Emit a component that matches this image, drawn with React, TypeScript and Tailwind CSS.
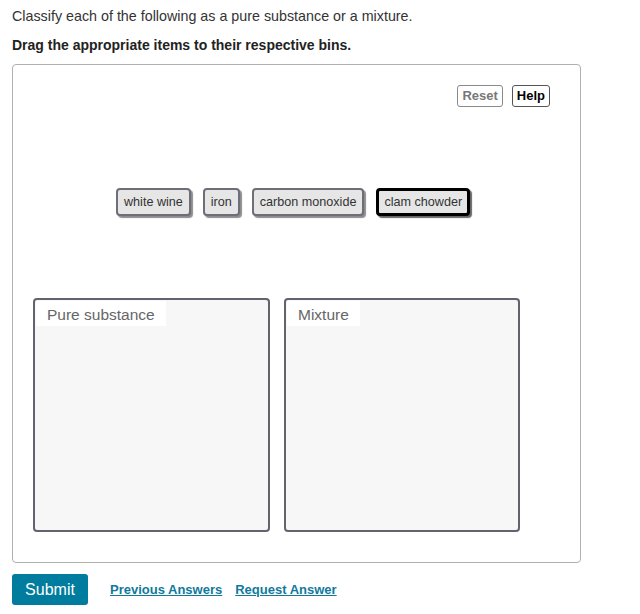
import React from "react";

const Item = ({ label, active }: { label: string; active?: boolean }) => (
  <div
    className={
      active
        ? "h-[28px] px-[5px] flex items-center rounded-[4px] border-[3px] border-black bg-[#e6e6e6] text-[12.6px] text-[#333] shadow-[2px_2px_1px_rgba(0,0,0,0.6)]"
        : "h-[28px] px-[6px] flex items-center rounded-[4px] border-2 border-[#6e6e7a] bg-[#e6e6e6] text-[12.6px] text-[#333] shadow-[2px_2px_1px_rgba(0,0,0,0.45)]"
    }
  >
    {label}
  </div>
);

const Bin = ({ label, w }: { label: string; w: string }) => (
  <div className={`${w} h-[234px] rounded-[4px] border-2 border-[#63636f] bg-[#f7f7f7] p-[1px]`}>
    <div className="inline-block bg-white pl-[11px] pr-[11px] h-[25px] pt-[3px] leading-[22px] text-[15.5px] text-[#666]">
      {label}
    </div>
  </div>
);

export default function App() {
  return (
    <div className="w-[640px] h-[614px] bg-white font-['Liberation_Sans',Arial,sans-serif] text-[#333]">
      <div className="px-[12px] pt-[6px]">
        <p className="text-[14.3px] leading-[20px] text-[#333]">
          Classify each of the following as a pure substance or a mixture.
        </p>
        <p className="mt-[9px] text-[14px] leading-[20px] font-bold text-[#222]">
          Drag the appropriate items to their respective bins.
        </p>
        <div className="mt-[9px] w-[569px] h-[499px] rounded-[4px] border border-[#b0b0b0] relative">
          <div className="flex justify-end gap-[9px] pt-[20px] pr-[30px]">
            <button className="h-[22px] px-[4px] rounded-[3px] border border-[#8a8a8a] bg-white text-[13px] font-bold text-[#777]">
              Reset
            </button>
            <button className="h-[22px] px-[4px] rounded-[3px] border border-[#555] bg-white text-[13px] font-bold text-black">
              Help
            </button>
          </div>
          <div className="flex gap-[12px] mt-[81px] pl-[103px]">
            <Item label="white wine" />
            <Item label="iron" />
            <Item label="carbon monoxide" />
            <Item label="clam chowder" active />
          </div>
          <div className="flex gap-[14px] mt-[82px] pl-[20px]">
            <Bin label="Pure substance" w="w-[237px]" />
            <Bin label="Mixture" w="w-[236px]" />
          </div>
        </div>
        <div className="flex items-center mt-[11px]">
          <button className="w-[76px] h-[31px] rounded-[3px] bg-[#007c9e] text-white text-[16px]">
            Submit
          </button>
          <a className="ml-[22px] text-[13px] font-bold text-[#0f7a9c] underline cursor-pointer">
            Previous Answers
          </a>
          <a className="ml-[13px] text-[13px] font-bold text-[#0f7a9c] underline cursor-pointer">
            Request Answer
          </a>
        </div>
      </div>
    </div>
  );
}
